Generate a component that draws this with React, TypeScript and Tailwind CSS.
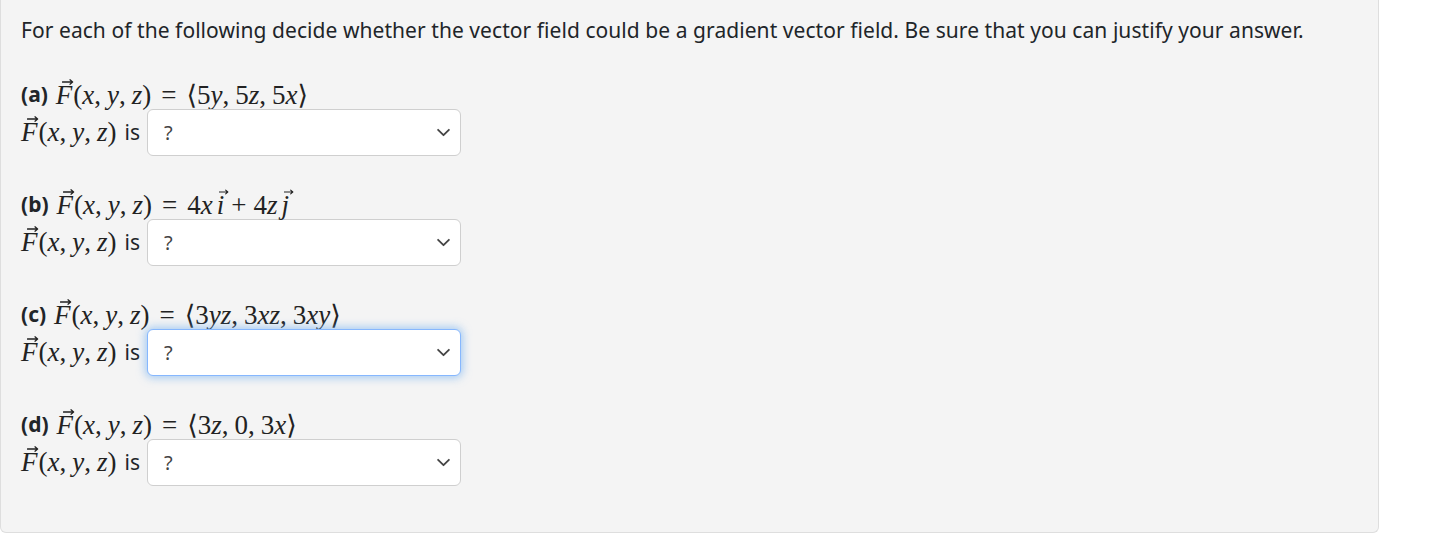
import type { ReactNode } from "react";

const sans = "font-['Segoe_UI','Noto_Sans','Open_Sans',sans-serif]";
const serif = "font-['Liberation_Serif','DejaVu_Serif',serif]";

/** letter with the little right arrow drawn above it */
function Vec({ children, wide = false }: { children: ReactNode; wide?: boolean }) {
  return (
    <span className="relative inline-block leading-none">
      <svg
        viewBox="0 0 12 6"
        className={`absolute -top-[3px] ${wide ? "left-[6px] w-[12px]" : "left-[2px] w-[10px]"} h-[6px]`}
        fill="none"
        stroke="#222"
        strokeWidth="1.3"
      >
        <path d="M0.5 3h10M8 0.8l2.6 2.2L8 5.2" strokeLinecap="round" strokeLinejoin="round" />
      </svg>
      <i>{children}</i>
    </span>
  );
}

function V({ children }: { children: ReactNode }) {
  return <i>{children}</i>;
}

function C() {
  return <span className="mr-[6px]">,</span>;
}

function Fxyz() {
  return (
    <span className="whitespace-nowrap">
      <Vec wide>F</Vec>
      <span className="ml-[1px]">(</span>
      <V>x</V>
      <C />
      <V>y</V>
      <C />
      <V>z</V>)
    </span>
  );
}

function Select({ focused = false }: { focused?: boolean }) {
  return (
    <div
      className={`flex h-[47px] w-[314px] shrink-0 items-center justify-between rounded-[6px] border bg-white pl-[16px] pr-[9px] ${
        focused
          ? "border-[#86b7fe] shadow-[0_0_8px_2px_rgba(102,170,240,0.55)]"
          : "border-[#cfcfcf]"
      }`}
    >
      <span className={`${sans} text-[20px] text-[#444]`}>?</span>
      <svg viewBox="0 0 16 10" className="h-[9px] w-[15px]" fill="none" stroke="#444" strokeWidth="2">
        <path d="M2 2l6 6 6-6" strokeLinecap="round" strokeLinejoin="round" />
      </svg>
    </div>
  );
}

function Item({ label, rhs, focused }: { label: string; rhs: ReactNode; focused?: boolean }) {
  return (
    <div>
      <div className="flex h-[28px] items-center gap-[8px]">
        <span className={`${sans} text-[21px] font-bold text-[#212529]`}>({label})</span>
        <span className={`${serif} text-[27px] text-[#222]`}>
          <Fxyz />
          <span className="mx-[10px]">=</span>
          {rhs}
        </span>
      </div>
      <div className="flex h-[47px] items-center">
        <span className={`${serif} text-[27px] text-[#222]`}>
          <Fxyz />
        </span>
        <span className={`${sans} ml-[8px] mr-[7px] text-[21px] text-[#212529]`}>is</span>
        <Select focused={focused} />
      </div>
    </div>
  );
}

export default function App() {
  return (
    <div className="h-[540px] w-full bg-white">
      <div className="h-[533px] w-[1379px] rounded-b-[6px] border border-t-0 border-[#dedede] bg-[#f4f4f4] pl-[20px] pt-[15px]">
        <p className={`${sans} h-[30px] text-[21px] leading-[30px] tracking-[0.06px] text-[#212529]`}>
          For each of the following decide whether the vector field could be a gradient vector field. Be sure that you
          can justify your answer.
        </p>
        <div className="mt-[36px] flex flex-col gap-[35px]">
          <Item
            label="a"
            rhs={
              <span>
                ⟨5<V>y</V>
                <C />5<V>z</V>
                <C />5<V>x</V>⟩
              </span>
            }
          />
          <Item
            label="b"
            rhs={
              <span>
                4<V>x</V>
                <span className="ml-[4px]" />
                <Vec>i</Vec>
                <span className="mx-[7px]">+</span>4<V>z</V>
                <span className="ml-[4px]" />
                <Vec>j</Vec>
              </span>
            }
          />
          <Item
            label="c"
            focused
            rhs={
              <span>
                ⟨3<V>yz</V>
                <C />3<V>xz</V>
                <C />3<V>xy</V>⟩
              </span>
            }
          />
          <Item
            label="d"
            rhs={
              <span>
                ⟨3<V>z</V>
                <C />0<C />3<V>x</V>⟩
              </span>
            }
          />
        </div>
      </div>
    </div>
  );
}
